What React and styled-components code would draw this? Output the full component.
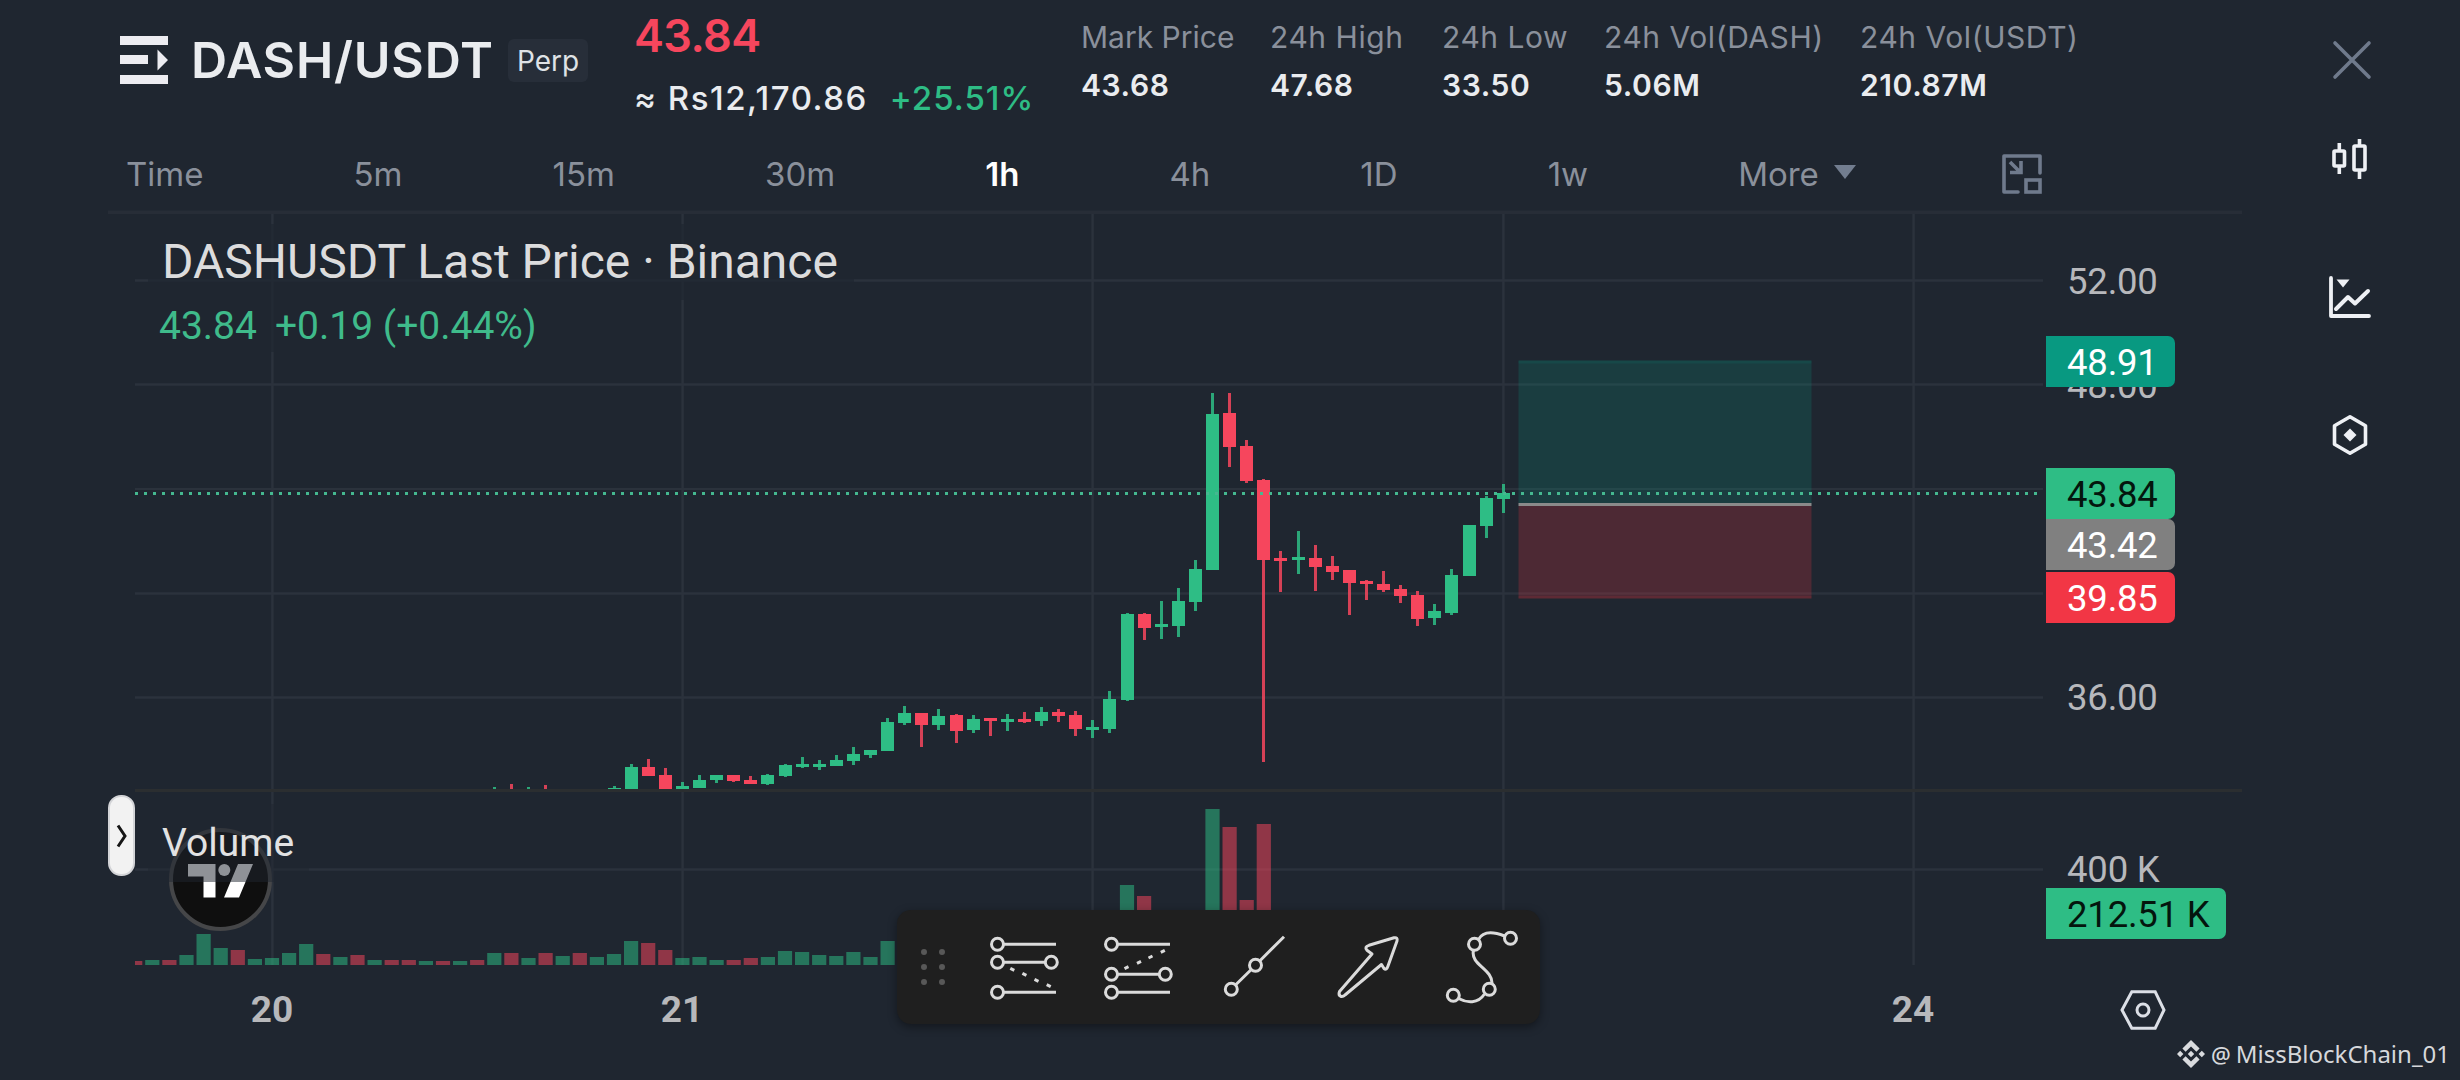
import React from 'react';
import styled, { createGlobalStyle } from 'styled-components';

const GREEN = '#2ebd85';
const RED = '#f6465d';
const BASE = '#1f2630';

// Chart space: one candle every 17.1 units, index 0 is midnight of the 20th
const candleX = i => 272.4 + 17.1 * i;

// [index, direction, high, body top, body bottom, low]
const candles = [
    [13, 'u', 787, 789, 790, 790],
    [14, 'd', 784, 789, 790, 790],
    [15, 'u', 787, 789, 790, 790],
    [16, 'd', 785, 789, 790, 790],
    [20, 'u', 786, 788, 789, 789],
    [21, 'u', 764, 767, 789, 789],
    [22, 'd', 759, 767, 776, 776],
    [23, 'd', 768, 775, 789, 789],
    [24, 'u', 782, 786, 789, 789],
    [25, 'u', 775, 780, 788, 788],
    [26, 'u', 775, 775, 780, 783],
    [27, 'd', 775, 775, 781, 782],
    [28, 'd', 776, 780, 784, 784],
    [29, 'u', 774, 775, 784, 785],
    [30, 'u', 764, 765, 776, 777],
    [31, 'u', 757, 764, 767, 768],
    [32, 'u', 760, 764, 767, 770],
    [33, 'u', 755, 760, 766, 766],
    [34, 'u', 747, 754, 761, 765],
    [35, 'u', 750, 750, 755, 758],
    [36, 'u', 718, 722, 751, 751],
    [37, 'u', 706, 713, 723, 725],
    [38, 'd', 713, 713, 725, 747],
    [39, 'u', 709, 716, 725, 730],
    [40, 'd', 714, 715, 731, 743],
    [41, 'u', 715, 719, 730, 733],
    [42, 'd', 718, 718, 721, 736],
    [43, 'u', 714, 719, 722, 731],
    [44, 'd', 712, 719, 722, 723],
    [45, 'u', 707, 712, 721, 726],
    [46, 'd', 709, 712, 716, 722],
    [47, 'd', 711, 715, 729, 736],
    [48, 'u', 720, 727, 730, 738],
    [49, 'u', 691, 699, 729, 733],
    [50, 'u', 613, 614, 700, 701],
    [51, 'd', 613, 614, 628, 640],
    [52, 'u', 601, 624, 627, 639],
    [53, 'u', 588, 601, 626, 637],
    [54, 'u', 560, 569, 602, 611],
    [55, 'u', 393, 414, 570, 570],
    [56, 'd', 393, 413, 447, 467],
    [57, 'd', 440, 446, 481, 483],
    [58, 'd', 479, 480, 560, 762],
    [59, 'd', 551, 558, 561, 592],
    [60, 'u', 531, 557, 560, 574],
    [61, 'd', 545, 558, 567, 591],
    [62, 'd', 556, 566, 572, 580],
    [63, 'd', 570, 570, 583, 615],
    [64, 'd', 580, 581, 584, 600],
    [65, 'd', 571, 584, 590, 592],
    [66, 'd', 585, 589, 596, 603],
    [67, 'd', 591, 595, 619, 626],
    [68, 'u', 604, 611, 618, 625],
    [69, 'u', 569, 575, 613, 615],
    [70, 'u', 525, 525, 576, 576],
    [71, 'u', 496, 498, 526, 538],
    [72, 'u', 484, 493, 499, 513],
];

// [index, direction, height]
const volumes = [
    [-8, 'd', 4], [-7, 'u', 5], [-6, 'd', 5], [-5, 'u', 10], [-4, 'u', 31], [-3, 'u', 17],
    [-2, 'd', 15], [-1, 'u', 6], [0, 'u', 7], [1, 'u', 12], [2, 'u', 21], [3, 'd', 11],
    [4, 'u', 8], [5, 'd', 10], [6, 'u', 5], [7, 'd', 5], [8, 'd', 5], [9, 'u', 4],
    [10, 'd', 4], [11, 'u', 4], [12, 'd', 5], [13, 'u', 12], [14, 'd', 12], [15, 'u', 7],
    [16, 'd', 12], [17, 'u', 9], [18, 'd', 12], [19, 'u', 8], [20, 'u', 11], [21, 'u', 24],
    [22, 'd', 22], [23, 'd', 15], [24, 'u', 7], [25, 'u', 8], [26, 'u', 5], [27, 'd', 5],
    [28, 'd', 7], [29, 'u', 8], [30, 'u', 14], [31, 'u', 13], [32, 'u', 10], [33, 'u', 9],
    [34, 'u', 13], [35, 'u', 8], [36, 'u', 24], [50, 'u', 80], [51, 'd', 69], [55, 'u', 156],
    [56, 'd', 138], [57, 'd', 65], [58, 'd', 141],
];

const stats = [
    { label: 'Mark Price', value: '43.68' },
    { label: '24h High', value: '47.68' },
    { label: '24h Low', value: '33.50' },
    { label: '24h Vol(DASH)', value: '5.06M' },
    { label: '24h Vol(USDT)', value: '210.87M' },
];

const intervals = ['Time', '5m', '15m', '30m', '1h', '4h', '1D', '1w'];

const priceTicks = [
    { text: '52.00', y: 281 },
    { text: '48.00', y: 385 },
    { text: '36.00', y: 697 },
    { text: '400 K', y: 869 },
];

const priceTags = [
    { text: '48.91', top: 336, bg: '#089981', color: '#fff' },
    { text: '43.84', top: 468, bg: GREEN, color: '#04150d' },
    { text: '43.42', top: 519, bg: '#808080', color: '#fff' },
    { text: '39.85', top: 572, bg: '#f23645', color: '#fff' },
    { text: '212.51 K', top: 888, bg: GREEN, color: '#04150d', wide: true },
];

const days = [
    { text: '20', x: 272 },
    { text: '21', x: 682 },
    { text: '24', x: 1913 },
];

const MenuIcon = () => (
    <svg width="48" height="48" viewBox="0 0 48 48" fill="#ececf1">
        <path d="M0 0h48v9H0zM0 19h28v9H0zM0 39h48v9H0zM37.5 13.5L48 24L37.5 34.5z" />
    </svg>
);

const CollapseIcon = () => (
    <svg width="40" height="40" viewBox="0 0 40 40" fill="none" stroke="#6f7a8c" strokeWidth="3.6">
        <path d="M38 19V2H2v36h14" strokeLinejoin="round" strokeLinecap="round" />
        <path d="M8 8l10 10M19 7v11.500H8" />
        <rect x="24" y="26" width="14" height="12" />
    </svg>
);

const CloseIcon = () => (
    <svg width="44" height="44" viewBox="0 0 44 44" stroke="#6f7a8c" strokeWidth="3.6" strokeLinecap="round">
        <path d="M7 5l34 34M41 5L7 39" />
    </svg>
);

const CandlesIcon = () => (
    <svg width="44" height="44" viewBox="0 0 44 44" fill="none" stroke="#eef0f4" strokeWidth="3.600">
        <rect x="6" y="14" width="10.500" height="15" rx="1" />
        <rect x="26" y="9" width="11" height="24" rx="1" />
        <path d="M11.300 6v8M11.300 29v8M31.500 2v7M31.500 33v9" />
    </svg>
);

const IndicatorIcon = () => (
    <svg width="44" height="44" viewBox="0 0 44 44" fill="none" stroke="#eef0f4" strokeWidth="3.800" strokeLinecap="round" strokeLinejoin="round">
        <path d="M3 3v38h38" />
        <path d="M8 34l12-12 7 6.500L40 16" strokeWidth="4" />
        <path d="M8.500 4.500h13l-6.500 8z" fill="#eef0f4" stroke="none" />
    </svg>
);

const SettingsIcon = () => (
    <svg width="44" height="44" viewBox="0 0 44 44" fill="none" stroke="#eef0f4" strokeWidth="3.600" strokeLinejoin="round">
        <path d="M22 3.800l15.500 8.900v18.600L22 40.200L6.500 31.300V12.700z" />
        <path d="M22 15.500l6.500 6.500-6.500 6.500-6.500-6.500z" fill="#eef0f4" stroke="none" />
    </svg>
);

const AxisSettingsIcon = () => (
    <svg width="46" height="40" viewBox="0 0 46 40" fill="none" stroke="#dcdfe6" strokeWidth="3">
        <path d="M11.800 1.800h23.400L44 20l-8.800 18.200H11.800L2 20z" />
        <circle cx="23" cy="20" r="6" />
    </svg>
);

const BinanceIcon = () => (
    <svg width="28" height="28" viewBox="0 0 28 28" fill="#d9dbde">
        <path d="M14 0l8.600 8.600-3.200 3.200L14 6.400l-5.400 5.400-3.200-3.200z" />
        <path d="M14 28l8.600-8.600-3.200-3.200L14 21.600l-5.400-5.400-3.200 3.200z" />
        <path d="M0 14l3.200-3.200L6.400 14l-3.200 3.200zM21.600 14l3.200-3.200L28 14l-3.200 3.200zM10.800 14l3.200-3.200 3.200 3.200-3.200 3.200z" />
    </svg>
);

const ToolSvg = ({ children }) => (
    <svg width="80" height="80" viewBox="0 0 80 80" fill="none" stroke="#dbdbdb" strokeWidth="3">
        {children}
    </svg>
);

const LongPositionIcon = () => (
    <ToolSvg>
        <path d="M18 17.300h53M18 35.300h42M18 65.300h53" />
        <circle cx="12.500" cy="17.300" r="6" />
        <circle cx="12.500" cy="35.300" r="6" />
        <circle cx="66.300" cy="35.300" r="6" />
        <circle cx="12.500" cy="65.300" r="6" />
        <path d="M25.300 41.300l4 2M37.400 46.300l4 2M49.500 52.300l4 2M61.700 57.700l4 2" />
    </ToolSvg>
);

const ShortPositionIcon = () => (
    <ToolSvg>
        <path d="M18 17.300h53M18 47.300h42M18 65.300h53" />
        <circle cx="12.500" cy="17.300" r="6" />
        <circle cx="12.500" cy="47.300" r="6" />
        <circle cx="66.300" cy="47.300" r="6" />
        <circle cx="12.500" cy="65.300" r="6" />
        <path d="M25.500 41.700l4-2M38 36.300l4-2M49.500 31l4-2M61.800 25.300l4-2" />
    </ToolSvg>
);

const TrendLineIcon = () => (
    <ToolSvg>
        <circle cx="18.300" cy="62.300" r="6" />
        <circle cx="42.500" cy="38.300" r="6" />
        <path d="M22.500 58L38.300 42.500M46.700 34L71 9.700" />
    </ToolSvg>
);

const ArrowIcon = () => (
    <ToolSvg>
        <path
            strokeLinejoin="round"
            d="M67 10.800L42 18.300Q37 20 40 23.300L45 27L12.500 64.500Q11 68 14 69.500Q16 70 18 68L54.500 37.500L57 41.500Q59.500 43.500 61 39L70 14Q71 10 67 10.800z"
        />
    </ToolSvg>
);

const CurveIcon = () => (
    <ToolSvg>
        <circle cx="12.300" cy="68.300" r="6" />
        <circle cx="48.300" cy="62.300" r="6" />
        <circle cx="33.500" cy="17.300" r="6" />
        <circle cx="69.500" cy="11.300" r="6" />
        <path d="M17.500 71.500C26 76 37 77 43.500 67M51 57C52 42 29 38 32.500 23.300M37.500 12.500C42 4 52 4.500 63.500 9" />
    </ToolSvg>
);

function PriceChart() {
    return (
        <Plot viewBox="108 210 1938 756">
            <g stroke="#2b323c" strokeWidth="2.500">
                {[272.4, 682.6, 1092.6, 1503.4, 1913.6].map(x => <path key={x} d={`M${x} 213V965`} />)}
                {[280.5, 384.5, 593.5, 697.5, 869.5].map(y => <path key={y} d={`M135 ${y}H2043`} />)}
                <path d="M135 489H2043" strokeWidth="2" />
            </g>
            <g fillOpacity="0.53">
                {volumes.map(([i, dir, h]) => {
                    const left = Math.max(135, candleX(i) - 7.5);
                    return (
                        <rect key={i} x={left} y={965 - h} width={candleX(i) + 6.7 - left} height={h} fill={dir === 'u' ? GREEN : RED} />
                    );
                })}
            </g>
            {candles.map(([i, dir, high, top, bottom, low]) => {
                const x = Math.floor(candleX(i) - 0.39);
                const color = dir === 'u' ? GREEN : RED;
                return (
                    <g key={i} fill={color}>
                        <rect x={x - 1} y={high} width="3" height={low - high} fillOpacity="0.85" />
                        <rect x={x - 6} y={top} width="13" height={bottom - top} />
                    </g>
                );
            })}
            <rect x="1518.500" y="360.500" width="293" height="142.500" fill="#089981" fillOpacity="0.2" />
            <rect x="1518.500" y="360.500" width="293" height="3" fill="#089981" fillOpacity="0.12" />
            <rect x="1518.500" y="506" width="293" height="92.500" fill="#f23645" fillOpacity="0.22" />
            <rect x="1518.500" y="596" width="293" height="2.500" fill="#f23645" fillOpacity="0.1" />
            <rect x="1518.500" y="503" width="293" height="3" fill="#8a8a8a" />
            <path d="M135 493.500H2040" stroke="#45b890" strokeWidth="3" strokeDasharray="3 6" />
            <path d="M108 212.300H2242" stroke="#272d37" strokeWidth="3.500" />
            <path d="M135 790.500H2242" stroke="#2b2e30" strokeWidth="3" />
        </Plot>
    );
}

const TradingViewMark = () => (
    <LogoCircle>
        <svg width="66" height="34" viewBox="0 0 66 34" fill="#fff">
            <path d="M0 0h27.500v33.500h-12V12.500H0zM50 0h15L51 33.500H36z" />
            <circle cx="36.300" cy="6" r="6" />
        </svg>
    </LogoCircle>
);

export default function App() {
    return (
        <Screen>
            <GlobalStyle />
            <Main>
                <Header>
                    <SymbolBlock>
                        <MenuIcon />
                        <SymbolName>DASH/USDT</SymbolName>
                        <Badge>Perp</Badge>
                    </SymbolBlock>
                    <PriceBlock>
                        <LastPrice>43.84</LastPrice>
                        <FiatRow>
                            <span>≈ Rs12,170.86</span>
                            <Change>+25.51%</Change>
                        </FiatRow>
                    </PriceBlock>
                    {stats.map(s => (
                        <Stat key={s.label}>
                            <StatLabel $tight={s.label === 'Mark Price'}>{s.label}</StatLabel>
                            <StatValue>{s.value}</StatValue>
                        </Stat>
                    ))}
                </Header>
                <Intervals>
                    {intervals.map(name => <Interval key={name} $active={name === '1h'}>{name}</Interval>)}
                    <Interval>
                        More
                        <Caret />
                    </Interval>
                    <CollapseIcon />
                </Intervals>
                <ChartArea>
                    <PriceChart />
                    <PriceAxis>
                        {priceTicks.map(t => <Tick key={t.text} $y={t.y - 210}>{t.text}</Tick>)}
                        {priceTags.map(t => (
                            <Tag key={t.text} $top={t.top - 210} $bg={t.bg} $color={t.color} $wide={t.wide}>{t.text}</Tag>
                        ))}
                    </PriceAxis>
                    <LogoSlot><TradingViewMark /></LogoSlot>
                    <Legend>
                        <LegendTitle>DASHUSDT Last Price · Binance</LegendTitle>
                        <LegendValues>
                            <span>43.84</span>
                            <span>+0.19 (+0.44%)</span>
                        </LegendValues>
                    </Legend>
                    <VolumeLegend>Volume</VolumeLegend>
                    <DrawerHandle>
                        <svg width="12" height="24" viewBox="0 0 12 24" fill="none" stroke="#161616" strokeWidth="3">
                            <path d="M2 1.500L9 12L2 22.500" />
                        </svg>
                    </DrawerHandle>
                    <Toolbar>
                        <Grip>{[0, 1, 2, 3, 4, 5].map(n => <i key={n} />)}</Grip>
                        <LongPositionIcon />
                        <ShortPositionIcon />
                        <TrendLineIcon />
                        <ArrowIcon />
                        <CurveIcon />
                    </Toolbar>
                </ChartArea>
                <TimeAxis>
                    {days.map(d => <Day key={d.text} $x={d.x - 108}>{d.text}</Day>)}
                    <AxisSettingsIcon />
                </TimeAxis>
            </Main>
            <Rail>
                <CloseIcon />
                <CandlesIcon />
                <IndicatorIcon />
                <SettingsIcon />
            </Rail>
            <Watermark>
                <BinanceIcon />
                <At>@</At>
                <span>MissBlockChain_01</span>
            </Watermark>
        </Screen>
    );
}

const GlobalStyle = createGlobalStyle`
    * {
        box-sizing: border-box;
    }
    body {
        margin: 0;
        background: ${BASE};
    }
    svg {
        display: block;
        flex: none;
    }
`;

const Screen = styled.div`
    position: relative;
    display: flex;
    width: 2460px;
    height: 1080px;
    overflow: hidden;
    background: ${BASE};
    color: #eaecef;
    font-family: 'Inter', 'Liberation Sans', sans-serif;
    white-space: nowrap;
`;

const Main = styled.div`
    display: flex;
    flex-direction: column;
    width: 2242px;
    padding-left: 108px;
`;

const Header = styled.div`
    display: grid;
    grid-template-columns: 514px 447px 189px 172px 162px 256px 250px;
    height: 130px;
    padding-left: 12px;
`;

const SymbolBlock = styled.div`
    display: flex;
    align-items: center;
    height: 120px;
`;

const SymbolName = styled.div`
    width: 317px;
    margin-left: 23px;
    font-size: 50px;
    font-weight: 600;
    letter-spacing: 0.8px;
`;

const Badge = styled.div`
    width: 80px;
    height: 43px;
    border-radius: 6px;
    background: #272e39;
    color: #dfe2e6;
    font-size: 28px;
    line-height: 45px;
    text-align: center;
`;

const PriceBlock = styled.div`
    padding-top: 11px;
`;

const LastPrice = styled.div`
    color: ${RED};
    font-size: 45px;
    font-weight: 600;
    letter-spacing: -0.6px;
    line-height: 50px;
`;

const FiatRow = styled.div`
    display: flex;
    gap: 22px;
    margin-top: 16px;
    font-size: 33px;
    font-weight: 500;
    letter-spacing: 1.5px;
    line-height: 42px;
`;

const Change = styled.span`
    color: ${GREEN};
    letter-spacing: 1px;
`;

const Stat = styled.div`
    padding-top: 17px;
`;

const StatLabel = styled.div`
    color: #8a909b;
    font-size: 30px;
    letter-spacing: ${({ $tight }) => $tight ? 0 : 0.55}px;
    line-height: 40px;
`;

const StatValue = styled.div`
    margin-top: 8px;
    font-size: 30px;
    font-weight: 600;
    letter-spacing: 0.6px;
    line-height: 40px;
`;

const Intervals = styled.div`
    display: flex;
    justify-content: space-between;
    align-items: center;
    height: 80px;
    padding: 8px 200px 0 18px;
`;

const Interval = styled.div`
    display: flex;
    align-items: center;
    color: ${({ $active }) => $active ? '#fff' : '#8a909b'};
    font-size: 33px;
    font-weight: ${({ $active }) => $active ? 600 : 400};

    & + svg {
        margin-left: -4px;
    }
`;

const Caret = styled.span`
    margin: -4px 0 0 15px;
    border: 11px solid transparent;
    border-top: 14px solid #727d8f;
    border-bottom: 0;
`;

const ChartArea = styled.div`
    position: relative;
    display: flex;
    height: 756px;
    font-family: 'Roboto', 'Liberation Sans', sans-serif;
`;

const Plot = styled.svg`
    width: 1938px;
    height: 756px;
    overflow: visible;
`;

const PriceAxis = styled.div`
    position: relative;
    width: 196px;
    font-size: 36.500px;
`;

const Tick = styled.div`
    position: absolute;
    top: ${({ $y }) => $y - 25}px;
    left: 20px;
    padding-left: 1px;
    color: #b7b8bc;
    letter-spacing: -0.2px;
    line-height: 51px;
`;

const Tag = styled.div`
    position: absolute;
    top: ${({ $top }) => $top}px;
    left: 0;
    width: ${({ $wide }) => $wide ? 180 : 129}px;
    height: 51px;
    padding-left: 21px;
    border-radius: 0 7px 7px 0;
    background: ${({ $bg }) => $bg};
    color: ${({ $color }) => $color};
    letter-spacing: -0.2px;
    line-height: 53px;
`;

const Legend = styled.div`
    position: absolute;
    top: 14px;
    left: 40px;
    display: flex;
    flex-direction: column;
    align-items: flex-start;
`;

const LegendTitle = styled.div`
    height: 76px;
    padding: 0 16px 0 14px;
    background: rgba(31, 38, 48, 0.7);
    color: #dcdcdd;
    font-size: 48px;
    line-height: 76px;
`;

const LegendValues = styled.div`
    display: flex;
    gap: 18px;
    height: 52px;
    padding: 0 12px 0 11px;
    background: rgba(31, 38, 48, 0.7);
    color: #3fbb8b;
    font-size: 39px;
    line-height: 52px;
`;

const VolumeLegend = styled.div`
    position: absolute;
    top: 594px;
    left: 40px;
    width: 161px;
    height: 78px;
    padding-left: 14px;
    background: rgba(31, 38, 48, 0.5);
    color: #e2e2e3;
    font-size: 39px;
    line-height: 78px;
`;

const LogoSlot = styled.div`
    position: absolute;
    top: 618px;
    left: 61px;
`;

const LogoCircle = styled.div`
    display: flex;
    align-items: center;
    justify-content: center;
    width: 103px;
    height: 103px;
    padding-top: 3px;
    border: 4px solid #454648;
    border-radius: 50%;
    background: #0f0f0f;
`;

const DrawerHandle = styled.div`
    position: absolute;
    top: 585px;
    left: 0;
    display: flex;
    align-items: center;
    justify-content: center;
    width: 27px;
    height: 81px;
    border: 2.500px solid #d3d4d7;
    border-radius: 13px;
    background: #f2f2f2;
`;

const Toolbar = styled.div`
    position: absolute;
    top: 700px;
    left: 789px;
    display: flex;
    align-items: center;
    gap: 34px;
    width: 643px;
    height: 114px;
    padding-left: 24px;
    border-radius: 14px;
    background: #1f1f1f;
    box-shadow: 0 3px 10px rgba(0, 0, 0, 0.4);
`;

const Grip = styled.div`
    display: grid;
    grid-template-columns: 6px 6px;
    gap: 9px 12px;
    width: 30px;

    i {
        width: 6px;
        height: 6px;
        border-radius: 50%;
        background: #585858;
    }
`;

const TimeAxis = styled.div`
    position: relative;
    display: flex;
    justify-content: flex-end;
    height: 114px;
    padding: 24px 76px 0 0;
    font-family: 'Roboto', 'Liberation Sans', sans-serif;
`;

const Day = styled.div`
    position: absolute;
    top: 24px;
    left: ${({ $x }) => $x - 40}px;
    width: 80px;
    color: #b7b8bb;
    font-size: 37px;
    font-weight: 700;
    line-height: 40px;
    text-align: center;
`;

const Rail = styled.div`
    display: flex;
    flex-direction: column;
    align-items: center;
    padding: 38px 0 0 86px;

    svg + svg {
        margin-top: 55px;
    }
    svg + svg + svg {
        margin-top: 94px;
    }
`;

const Watermark = styled.div`
    position: absolute;
    right: 10px;
    bottom: 9px;
    display: flex;
    align-items: center;
    gap: 6px;
    color: #d6d8db;
    font-family: 'Noto Sans', sans-serif;
    font-size: 24px;
    line-height: 34px;
`;

const At = styled.span`
    margin-right: -1px;
    font-size: 22px;
    font-weight: 500;
`;
